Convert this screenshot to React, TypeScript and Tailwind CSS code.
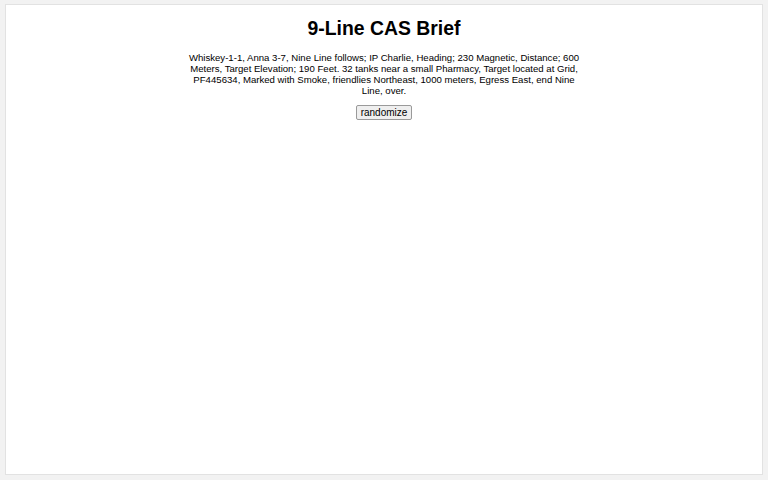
import { useState } from 'react';

const briefs = [
  'Whiskey-1-1, Anna 3-7, Nine Line follows; IP Charlie, Heading; 230 Magnetic, Distance; 600 Meters, Target Elevation; 190 Feet. 32 tanks near a small Pharmacy, Target located at Grid, PF445634, Marked with Smoke, friendlies Northeast, 1000 meters, Egress East, end Nine Line, over.',
  'Viper-2-1, Anna 3-7, Nine Line follows; IP Delta, Heading; 115 Magnetic, Distance; 800 Meters, Target Elevation; 240 Feet. 6 trucks near a bridge, Target located at Grid, PF512209, Marked with Laser, friendlies South, 1500 meters, Egress West, end Nine Line, over.',
];

export default function App() {
  const [index, setIndex] = useState(0);

  return (
    <div className="min-h-screen bg-[#f2f2f2] py-[4px] px-[5px]" style={{ fontFamily: '"Liberation Sans", Arial, sans-serif' }}>
      <div className="h-[471px] border border-[#e2e2e2] bg-white flex flex-col items-center pt-[11px]">
        <h1 className="text-[19.4px] font-bold leading-[24px] text-black">9-Line CAS Brief</h1>
        <p className="mt-[12px] w-[394px] text-center text-[9.6px] leading-[11px] text-black">
          {briefs[index]}
        </p>
        <button
          type="button"
          onClick={() => setIndex((index + 1) % briefs.length)}
          className="mt-[9px] h-[15px] px-[4px] text-[10px] leading-[12px] text-black bg-[#efefef] border border-[#9a9a9a] rounded-[2px]"
        >
          randomize
        </button>
      </div>
    </div>
  );
}
